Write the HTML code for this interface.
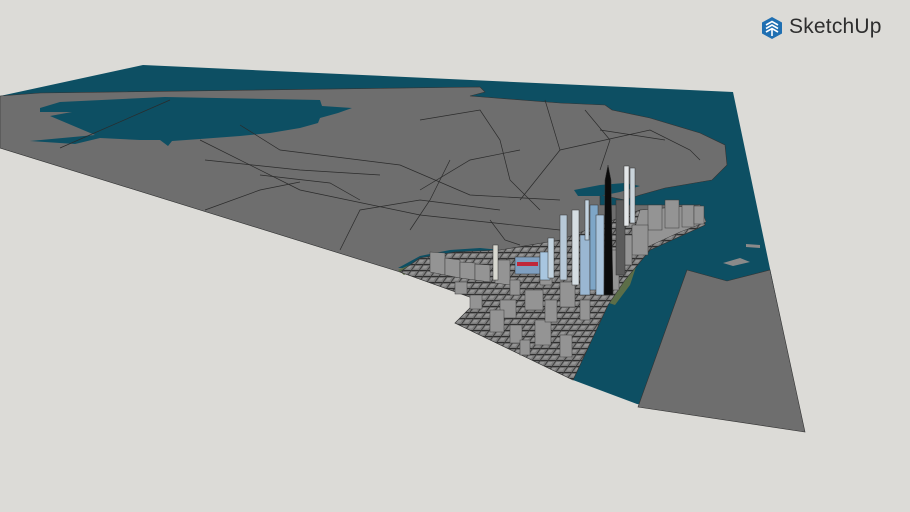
<!DOCTYPE html>
<html><head><meta charset="utf-8"><style>
html,body{margin:0;padding:0;background:#dcdbd7;width:910px;height:512px;overflow:hidden}
.logo{position:absolute;left:789px;top:15px;font-family:"Liberation Sans",sans-serif;font-size:21px;color:#2e2e2e;letter-spacing:0.2px}
</style></head><body>
<svg width="910" height="512" style="position:absolute;left:0;top:0">
<defs>
<pattern id="st" width="8" height="6" patternUnits="userSpaceOnUse" patternTransform="skewX(-35)">
<rect width="8" height="6" fill="#7c7c7c"/>
<rect width="8" height="1.2" fill="#2f2f2f"/>
<rect width="1.1" height="6" fill="#3a3a3a"/>
<rect x="2" y="2" width="4" height="2.5" fill="#959595"/>
</pattern>
</defs>
<!-- plane water -->
<polygon points="0,96 143,65 733,92 804,431 637,404 573,380 455,323 478,300 400,272 0,148" fill="#0d4f63"/>
<!-- main land -->
<polygon points="0,96 40,93 480,87 485,92 470,96 560,103 605,105 612,110 650,118 700,133 725,145 727,165 712,180 665,188 640,195 625,200 600,195 600,205 650,205 700,205 705,225 650,250 625,280 608,305 573,380 455,323 478,300 400,272 0,148" fill="#6e6e6e" stroke="#333" stroke-width="0.6"/>
<!-- top-left bay -->
<polygon points="40,108 60,102 165,97 320,100 322,106 352,108 338,113 320,118 318,123 300,128 270,133 240,136 200,139 172,141 168,146 160,140 140,140 100,138 75,144 30,141 95,135 50,116 72,112 40,112" fill="#0d4f63"/>
<!-- inlet -->
<polygon points="574,190 600,185 625,183 640,186 620,192 600,196 578,196" fill="#0d4f63"/>
<!-- left small bay by city -->
<polygon points="398,268 420,256 450,250 480,248 500,250 480,260 440,262 420,268" fill="#0d4f63"/>
<!-- roads -->
<g stroke="#2b2b2b" stroke-width="0.7" fill="none">
<path d="M60,148 L170,100"/><path d="M200,140 L300,190 L420,215 L560,230"/>
<path d="M240,125 L280,150 L400,165 L470,195 L560,200"/>
<path d="M205,160 L300,170 L380,175"/><path d="M205,210 L260,190 L300,182"/>
<path d="M260,175 L330,183 L360,200"/><path d="M340,250 L360,210 L420,200 L500,210"/>
<path d="M420,120 L480,110 L500,140 L510,180 L540,210"/><path d="M545,100 L560,150 L520,200"/>
<path d="M585,110 L610,140 L600,170"/><path d="M560,150 L650,130 L690,150 L700,160"/>
<path d="M420,190 L470,160 L520,150"/><path d="M450,160 L430,200 L410,230"/>
<path d="M490,220 L505,240 L520,245"/><path d="M600,130 L665,140"/>
</g>
<!-- right land -->
<polygon points="687,270 727,281 770,270 805,432 638,407" fill="#6e6e6e" stroke="#333" stroke-width="0.6"/>
<polygon points="723,263 740,258 750,262 733,266" fill="#8a8a8a"/>
<polygon points="746,244 760,245 760,248 746,247" fill="#8a8a8a"/>
<!-- green shore -->
<polygon points="615,265 640,255 630,285 615,305 600,300" fill="#5c6e48"/>
<polygon points="398,270 412,264 418,268 404,275" fill="#5c6e48"/>
<!-- city ground -->
<polygon points="400,272 420,258 455,252 500,250 560,240 600,225 640,210 700,205 705,225 650,250 625,280 608,305 573,380 455,323 478,300" fill="url(#st)" stroke="#333" stroke-width="0.6"/>
<!-- block buildings -->
<g fill="#949494" stroke="#3a3a3a" stroke-width="0.5">
<polygon points="430,252 445,253 445,275 430,272"/><polygon points="445,258 460,260 460,278 445,275"/>
<polygon points="460,262 475,263 475,280 460,278"/><polygon points="475,264 490,265 490,282 475,280"/>
<polygon points="495,260 510,260 510,285 495,283"/>
<rect x="540" y="265" width="12" height="20"/><rect x="560" y="282" width="15" height="25"/>
<rect x="525" y="290" width="18" height="20"/><rect x="500" y="300" width="16" height="18"/>
<rect x="490" y="310" width="14" height="22"/><rect x="535" y="320" width="16" height="25"/>
<rect x="560" y="335" width="12" height="22"/><rect x="510" y="325" width="12" height="18"/>
<rect x="545" y="300" width="12" height="22"/><rect x="470" y="295" width="12" height="14"/>
<rect x="520" y="340" width="10" height="15"/><rect x="580" y="300" width="10" height="20"/>
<rect x="455" y="282" width="12" height="12"/><rect x="510" y="280" width="10" height="15"/>
<polygon points="640,210 700,205 706,222 680,232 645,248 630,245"/>
<rect x="648" y="205" width="14" height="25"/><rect x="665" y="200" width="14" height="28"/>
<rect x="682" y="205" width="12" height="22"/><rect x="694" y="206" width="10" height="18"/>
<rect x="632" y="225" width="16" height="30"/><rect x="618" y="235" width="14" height="30"/>
<rect x="605" y="250" width="14" height="40"/>
</g>
<!-- stadium -->
<rect x="515" y="257" width="25" height="17" fill="#7f9fc0" stroke="#333" stroke-width="0.5"/>
<rect x="517" y="262" width="21" height="4" fill="#c0283a"/>
<!-- towers -->
<g stroke="#333" stroke-width="0.5">
<rect x="540" y="252" width="10" height="28" fill="#a8c6e0"/>
<rect x="560" y="215" width="7" height="65" fill="#b7c9d8"/>
<rect x="572" y="210" width="7" height="75" fill="#d5dde2"/>
<rect x="580" y="235" width="10" height="60" fill="#9ab7d2"/>
<rect x="590" y="205" width="8" height="85" fill="#7ea6c7"/>
<rect x="596" y="215" width="8" height="80" fill="#a9c4dc"/>
<rect x="616" y="200" width="9" height="75" fill="#5b5b5b"/>
<polygon points="605,180 608,165 611,180 613,295 604,295" fill="#0b0b0b"/>
<rect x="624" y="166" width="5" height="60" fill="#e3e6e8"/>
<rect x="630" y="168" width="5" height="55" fill="#c9d3da"/>
<rect x="585" y="200" width="4" height="40" fill="#c3d3e0"/>
<rect x="493" y="245" width="5" height="35" fill="#d8d8d0"/>
<rect x="548" y="238" width="6" height="40" fill="#c4d4e0"/>
</g>
</svg>
<svg width="22" height="24" viewBox="0 0 22 24" style="position:absolute;left:761px;top:16px">
<polygon points="11,1 21,6.5 21,17.5 11,23 1,17.5 1,6.5" fill="#1f6fb2"/>
<path d="M5,9 L11,5.5 L17,9 M5,12.5 L11,9 L17,12.5 M5,16 L11,12.5 L17,16 M11,12.5 L11,20" stroke="#fff" stroke-width="1.6" fill="none"/>
</svg>
<div class="logo">SketchUp</div>
</body></html>
